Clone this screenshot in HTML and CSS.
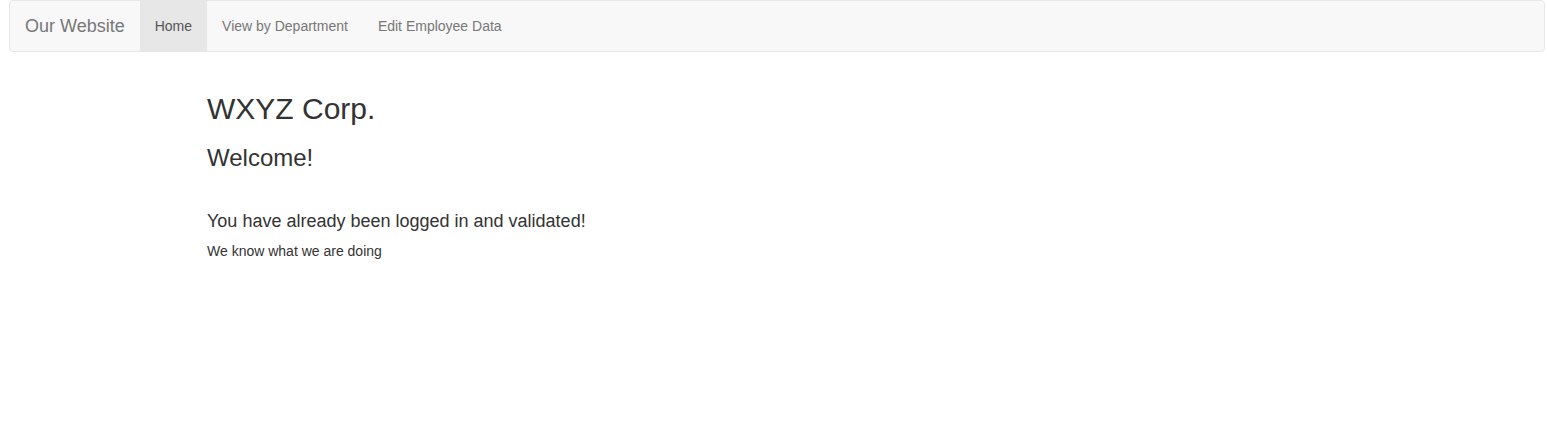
FILE: index.html
```html
<!DOCTYPE html>
<html>
<head>
<meta charset="utf-8">
<title>Our Website</title>
<link rel="stylesheet" href="styles.css">
</head>
<body>
<nav class="navbar">
  <a class="brand" href="#">Our Website</a>
  <ul class="nav">
    <li class="active"><a href="#">Home</a></li>
    <li><a href="#">View by Department</a></li>
    <li><a href="#">Edit Employee Data</a></li>
  </ul>
</nav>
<main class="container">
  <h2 class="title">WXYZ Corp.</h2>
  <h3 class="welcome">Welcome!</h3>
  <h4 class="status">You have already been logged in and validated!</h4>
  <p class="note">We know what we are doing</p>
</main>
</body>
</html>
```
FILE: styles.css
```css
* { box-sizing: border-box; }
html, body { margin: 0; padding: 0; }
body {
  font-family: "Liberation Sans", Arial, Helvetica, sans-serif;
  font-size: 14px;
  line-height: 1.42857;
  color: #333;
  background: #fff;
}
.navbar {
  display: flex;
  align-items: stretch;
  min-height: 52px;
  margin: 0 2px 20px 9px;
  background: #f8f8f8;
  border: 1px solid #e7e7e7;
  border-radius: 4px;
}
.brand {
  display: block;
  height: 50px;
  padding: 15px;
  font-size: 18px;
  line-height: 20px;
  color: #777;
  text-decoration: none;
}
.nav {
  display: flex;
  list-style: none;
  margin: 0;
  padding: 0;
}
.nav a {
  display: block;
  padding: 15px;
  line-height: 20px;
  color: #777;
  text-decoration: none;
}
.nav .active a {
  background: #e7e7e7;
  color: #555;
}
.container {
  display: flow-root;
  width: 1133px;
  margin: 0 auto;
}
h2, h3, h4 {
  font-family: inherit;
  font-weight: 500;
  line-height: 1.1;
  color: inherit;
}
.title { font-size: 30px; margin: 20px 0 10px; }
.welcome { font-size: 24px; margin: 20px 0 10px; }
.status { font-size: 18px; margin: 41px 0 10px; }
.note { margin: 0 0 10px; }
```
